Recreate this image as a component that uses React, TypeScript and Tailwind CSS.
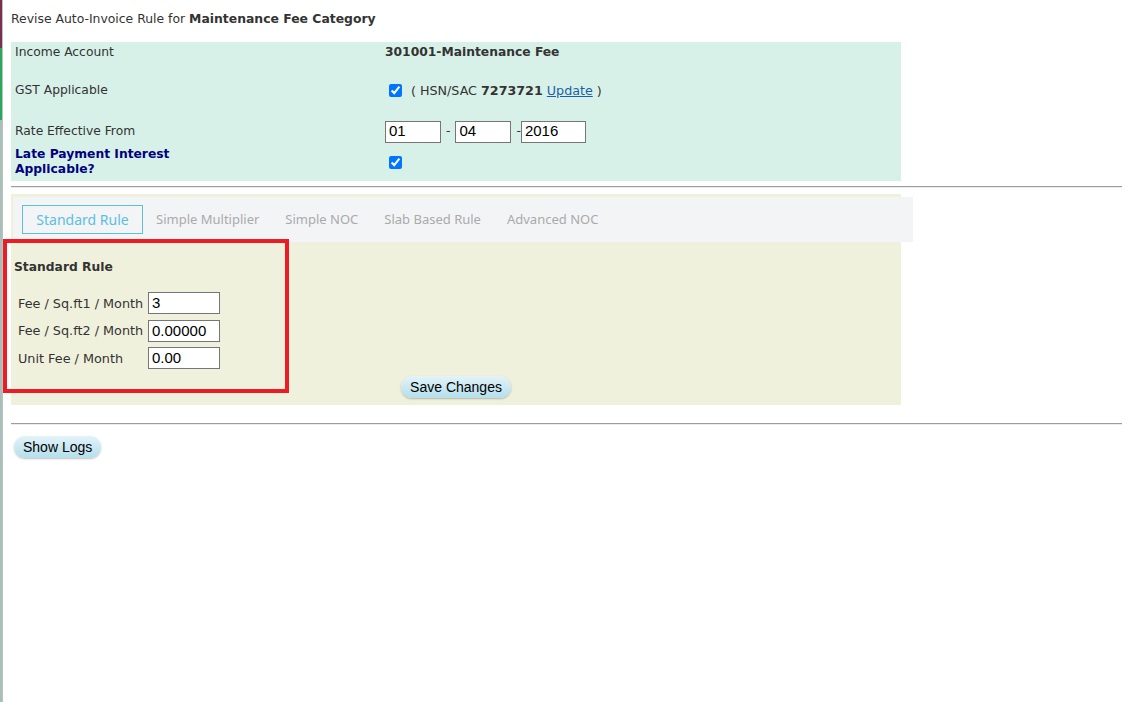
import React from "react";

const verdana = "font-['DejaVu_Sans',Verdana,sans-serif]";
const arial = "font-['Liberation_Sans',Arial,sans-serif]";

const tabs = ["Simple Multiplier", "Simple NOC", "Slab Based Rule", "Advanced NOC"];

const fields = [
  { label: "Fee / Sq.ft1 / Month", value: "3" },
  { label: "Fee / Sq.ft2 / Month", value: "0.00000" },
  { label: "Unit Fee / Month", value: "0.00" },
];

const PillButton = ({ children }: { children: React.ReactNode }) => (
  <button
    className={`${arial} h-[22px] rounded-full bg-gradient-to-b from-[#e3f3f9] to-[#b3dfeb] px-[9px] text-[14px] leading-none text-black shadow-[0_1px_2px_rgba(0,0,0,0.25)]`}
  >
    {children}
  </button>
);

const Hr = () => <div className="h-[2px] border-t border-t-[#9c9c9c] border-b border-b-[#ececec]" />;

const dateInput = `${arial} h-[22px] border border-[#767676] bg-white px-[3px] text-[15px] text-black`;

export default function App() {
  return (
    <div className={`flex min-h-[702px] bg-white text-[#333] ${verdana}`}>
      {/* sliver of the page behind */}
      <div className="flex w-[3px] flex-col border-r border-[#b8c4c0]">
        <div className="h-[48px] bg-[#7b2f4f]" />
        <div className="h-[72px] bg-[#27a85a]" />
        <div className="flex-1 bg-[#a9beb8]" />
      </div>

      <div className="relative flex-1 pl-[8px] pr-[5px]">
        <div className="flex h-[39px] items-center text-[12.4px]">
          Revise Auto-Invoice Rule for&nbsp;<b>Maintenance Fee Category</b>
        </div>

        {/* general info */}
        <div className="mt-[3px] w-[890px] bg-[#d8f1e8] pb-[2px] text-[12.3px]">
          <div className="flex h-[21px] items-center">
            <div className="w-[374px] pl-[4px]">Income Account</div>
            <b>301001-Maintenance Fee</b>
          </div>
          <div className="flex h-[55px] items-center">
            <div className="w-[374px] pl-[4px]">GST Applicable</div>
            <input type="checkbox" defaultChecked className="ml-[4px] h-[13px] w-[13px]" />
            <span className="ml-[9px] text-[12.7px]">
              ( HSN/SAC <b>7273721</b> <span className="text-[#1a5fa8] underline">Update</span> )
            </span>
          </div>
          <div className="flex h-[27px] items-center">
            <div className="w-[374px] pl-[4px]">Rate Effective From</div>
            <input defaultValue="01" className={`${dateInput} w-[56px]`} />
            <span className="mx-[5px]">-</span>
            <input defaultValue="04" className={`${dateInput} w-[56px]`} />
            <span className="ml-[5px]">-</span>
            <input defaultValue="2016" className={`${dateInput} w-[65px]`} />
          </div>
          <div className="flex h-[34px] items-center">
            <div className="w-[374px] pl-[4px] font-bold leading-[15px] text-[#000080]">
              Late Payment Interest
              <br />
              Applicable?
            </div>
            <input type="checkbox" defaultChecked className="ml-[4px] h-[13px] w-[13px]" />
          </div>
        </div>

        <div className="mt-[5px]">
          <Hr />
        </div>

        {/* rule panel */}
        <div className="mt-[6px] w-[890px] bg-[#f0f1dc] pt-[3px] pb-[7px]">
          <div className="ml-[2px] flex h-[45px] w-[900px] items-center bg-[#f3f4f6] pl-[9px] font-['Noto_Sans',sans-serif]">
            <div className="flex h-[29px] w-[121px] items-center justify-center border border-[#5bc0de] text-[14px] text-[#5bc0de]">
              Standard Rule
            </div>
            <div className="ml-[13px] flex gap-[26px] text-[13px] text-[#aaaaaa]">
              {tabs.map((t) => (
                <span key={t}>{t}</span>
              ))}
            </div>
          </div>

          <div className="pl-[3px] pt-[16px] text-[12.3px] font-bold">Standard Rule</div>

          <div className="mt-[16px] flex flex-col gap-[5.5px] pl-[7px]">
            {fields.map((f) => (
              <div key={f.label} className="flex h-[22px] items-center">
                <div className="w-[130px] text-[12.8px]">{f.label}</div>
                <input
                  defaultValue={f.value}
                  className={`${arial} h-[22px] w-[72px] border border-[#767676] bg-white px-[3px] text-[15px] text-black`}
                />
              </div>
            ))}
          </div>

          <div className="mt-[7px] flex justify-center">
            <PillButton>Save Changes</PillButton>
          </div>
        </div>

        <div className="mt-[18px]">
          <Hr />
        </div>

        <div className="mt-[10px] pl-[3px]">
          <PillButton>Show Logs</PillButton>
        </div>

        {/* annotation box */}
        <div className="absolute left-0 top-[239px] h-[154px] w-[286px] border-4 border-[#ed1c24]" />
      </div>
    </div>
  );
}
